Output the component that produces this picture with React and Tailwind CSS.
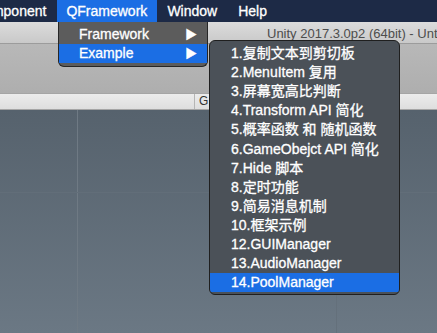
import React from "react";

const items = [
  "1.复制文本到剪切板",
  "2.MenuItem 复用",
  "3.屏幕宽高比判断",
  "4.Transform API 简化",
  "5.概率函数 和 随机函数",
  "6.GameObejct API 简化",
  "7.Hide 脚本",
  "8.定时功能",
  "9.简易消息机制",
  "10.框架示例",
  "12.GUIManager",
  "13.AudioManager",
  "14.PoolManager",
];

const font = { fontFamily: '"Liberation Sans", "Noto Sans CJK SC", sans-serif' };

export default function App() {
  return (
    <div
      className="relative w-[437px] h-[333px] overflow-hidden flex flex-col bg-[#5d6974]"
      style={font}
    >
      {/* macOS menu bar */}
      <div className="h-[22px] shrink-0 flex items-center bg-[#1d2a46] text-white text-[14px] [-webkit-text-stroke:0.3px_white]">
        <span className="ml-[-26px] whitespace-nowrap">Component</span>
        <div className="ml-[11px] h-[22px] w-[100px] flex items-center pl-[9px] bg-[#1b6ee4]">QFramework</div>
        <span className="ml-[10px]">Window</span>
        <span className="ml-[21px]">Help</span>
      </div>

      {/* title bar */}
      <div className="h-[22px] shrink-0 flex items-center pt-[3px] bg-gradient-to-b from-[#dcdcdc] to-[#c9c9c9] border-b border-[#9c9c9c]">
        <span className="ml-[267px] whitespace-nowrap text-[13px] text-[#4d4d4d]">
          Unity 2017.3.0p2 (64bit) - Untitled
        </span>
      </div>

      {/* toolbar */}
      <div className="h-[49px] shrink-0 bg-gradient-to-b from-[#b8b8b8] to-[#aeaeae]" />

      {/* strip */}
      <div className="h-[17px] shrink-0 flex bg-gradient-to-b from-[#ececec] to-[#dedede] border-y border-[#a5a5a5]">
        <div className="w-[195px] border-r border-[#b5b5b5]" />
        <span className="ml-[4px] text-[12px] leading-[15px] text-[#333]">G</span>
      </div>

      {/* scene view */}
      <div className="relative flex-1 bg-gradient-to-b from-[#56626d] to-[#6b7884]">
        <div className="absolute left-[77px] top-0 bottom-0 w-px bg-[#6f7a84]" />
        <div className="absolute left-0 right-0 top-[82px] h-px bg-[#626e79]" />
        <div className="absolute left-[336px] top-0 bottom-0 w-px bg-[#64707b]" />
      </div>

      {/* QFramework dropdown */}
      <div className="absolute left-[58px] top-[22px] w-[150px] h-[45px] pt-[3px] bg-[#5c5c5c] border border-t-0 border-[#262626] rounded-b-[6px] text-white text-[14px] [-webkit-text-stroke:0.3px_white]">
        <div className="h-[19px] flex items-center justify-between pl-[20px] pr-[10px]">
          <span>Framework</span>
          <span className="text-[12px]">▶</span>
        </div>
        <div className="h-[19px] flex items-center justify-between pl-[20px] pr-[10px] bg-[#1b6ee4]">
          <span>Example</span>
          <span className="text-[12px]">▶</span>
        </div>
      </div>

      {/* Example submenu */}
      <div className="absolute left-[209px] top-[40px] w-[191px] h-[255px] pt-[3px] bg-[#4b5158] border border-[#1f1f1f] rounded-[6px] text-white text-[14px] [-webkit-text-stroke:0.3px_white] overflow-hidden">
        {items.map((t, i) => (
          <div
            key={t}
            className={
              "h-[19.1px] flex items-center pl-[21px] whitespace-nowrap " +
              (i === items.length - 1 ? "bg-[#1b6ee4]" : "")
            }
          >
            {t}
          </div>
        ))}
      </div>
    </div>
  );
}
